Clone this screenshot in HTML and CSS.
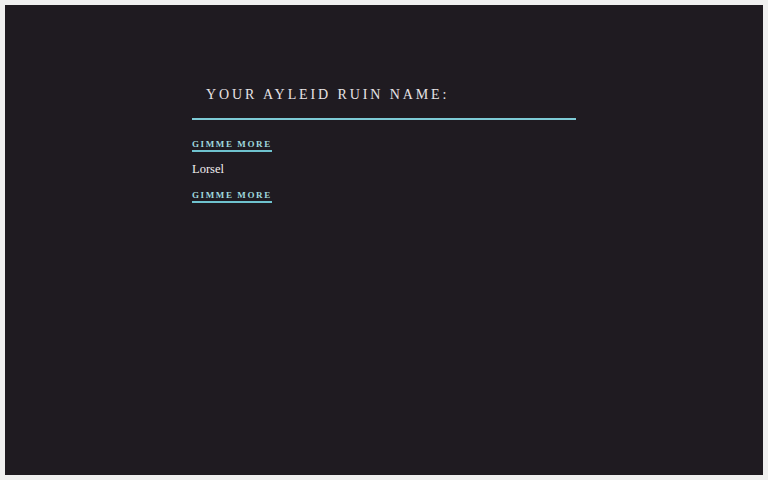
FILE: index.html
```html
<!DOCTYPE html>
<html lang="en">
<head>
  <meta charset="UTF-8">
  <meta name="viewport" content="width=device-width, initial-scale=1.0">
  <title>Ayleid Ruin Name Generator</title>
  <link rel="stylesheet" href="styles.css">
</head>
<body>
  <div class="frame">
    <main class="generator">
      <h1 class="title">Your Ayleid Ruin Name:</h1>
      <a class="more" href="#">Gimme more</a>
      <p class="name">Lorsel</p>
      <a class="more" href="#">Gimme more</a>
    </main>
  </div>
</body>
</html>
```

FILE: styles.css
```css
html, body {
  margin: 0;
  background: #f0f0f0;
}
body {
  padding: 5px;
  font-family: 'Liberation Serif', 'DejaVu Serif', serif;
}
.frame {
  background: #1f1b21;
  height: 470px;
  padding-top: 82px;
  box-sizing: border-box;
}
.generator {
  width: 384px;
  margin: 0 auto;
  display: flex;
  flex-direction: column;
  align-items: flex-start;
}
.title {
  align-self: stretch;
  margin: 0 0 19px;
  padding: 0 0 15px 14px;
  border-bottom: 2px solid #7ecbd6;
  color: #e8e4e6;
  font-size: 14px;
  font-weight: normal;
  text-transform: uppercase;
  letter-spacing: 2.9px;
}
.more {
  color: #9fd8de;
  font-size: 9px;
  font-weight: bold;
  text-transform: uppercase;
  letter-spacing: 1.6px;
  text-decoration: none;
  border-bottom: 2px solid #6fc3cf;
  line-height: 11px;
}
.name {
  margin: 10px 0 13px;
  color: #f2eef0;
  font-size: 12.5px;
}
```
